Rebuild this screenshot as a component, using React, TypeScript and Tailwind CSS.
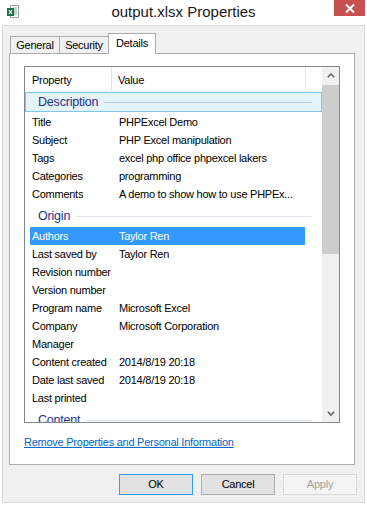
import React from "react";

type Row = { name: string; value?: string; selected?: boolean };

const description: Row[] = [
  { name: "Title", value: "PHPExcel Demo" },
  { name: "Subject", value: "PHP Excel manipulation" },
  { name: "Tags", value: "excel php office phpexcel lakers" },
  { name: "Categories", value: "programming" },
  { name: "Comments", value: "A demo to show how to use PHPEx..." },
];

const origin: Row[] = [
  { name: "Authors", value: "Taylor Ren", selected: true },
  { name: "Last saved by", value: "Taylor Ren" },
  { name: "Revision number" },
  { name: "Version number" },
  { name: "Program name", value: "Microsoft Excel" },
  { name: "Company", value: "Microsoft Corporation" },
  { name: "Manager" },
  { name: "Content created", value: "2014/8/19 20:18" },
  { name: "Date last saved", value: "2014/8/19 20:18" },
  { name: "Last printed" },
];

const ExcelIcon = () => (
  <svg width="12" height="13" viewBox="0 0 12 13">
    <rect x="3.5" y="0.5" width="8" height="12" fill="#fff" stroke="#9aa5a0" />
    <path d="M6 3h4M6 5h4M6 7h4M6 9h4" stroke="#7fae8e" strokeWidth="1" />
    <rect x="0" y="3" width="7" height="8" fill="#1e7145" />
    <path d="M2 5l3 4M5 5l-3 4" stroke="#fff" strokeWidth="1.2" />
  </svg>
);

const Chevron = ({ up }: { up?: boolean }) => (
  <svg width="8" height="5" viewBox="0 0 8 5">
    <path
      d={up ? "M0.8 4.2L4 1l3.2 3.2" : "M0.8 0.8L4 4l3.2-3.2"}
      stroke="#606060"
      strokeWidth="1.5"
      fill="none"
    />
  </svg>
);

const GroupHeader = ({ label, active, first }: { label: string; active?: boolean; first?: boolean }) => (
  <div className={first ? "h-[22px] shrink-0 pt-[1px]" : "h-[24px] shrink-0 pt-[3px]"}>
    <div
      className={
        active
          ? "h-[20px] flex items-center border border-[#7dc7ee] bg-[#e5f3fb] pl-[12px] pr-[9px]"
          : "h-[20px] flex items-center border border-transparent pl-[12px] pr-[9px]"
      }
    >
      <span className="text-[#1e3287] text-[12.5px] leading-none tracking-[-0.2px]">{label}</span>
      <div className={active ? "flex-1 ml-[6px] h-px bg-[#b9cde0]" : "flex-1 ml-[6px] h-px bg-[#dde3ec]"} />
    </div>
  </div>
);

const PropRow = ({ row }: { row: Row }) => (
  <div className="h-[18px] shrink-0 flex pl-[5px] pr-[17px]">
    <div
      className={
        row.selected
          ? "flex-1 flex items-center bg-[#3399ff] text-white"
          : "flex-1 flex items-center text-black"
      }
    >
      <span className="w-[89px] pl-[2px] whitespace-nowrap">{row.name}</span>
      <span className="whitespace-nowrap">{row.value}</span>
    </div>
  </div>
);

const Tab = ({ label, w }: { label: string; w: string }) => (
  <div
    className={`${w} h-[18px] mt-[3px] -mr-px border border-[#acacac] bg-[#f0f0f0] flex items-center justify-center`}
  >
    {label}
  </div>
);

export default function App() {
  return (
    <div
      className="w-[367px] h-[506px] bg-white overflow-hidden text-[11px] tracking-[-0.25px] text-black"
      style={{ fontFamily: '"Liberation Sans", Arial, sans-serif' }}
    >
      {/* title bar */}
      <div className="h-[25px] grid grid-cols-[1fr_auto_1fr] items-start">
        <div className="pl-[7px] pt-[5px]">
          <ExcelIcon />
        </div>
        <div className="pt-[1px] text-[15px] tracking-normal text-[#1a1a1a]">output.xlsx Properties</div>
        <div className="flex justify-end pr-[2px]">
          <div className="w-[31px] h-[16px] bg-[#c75050] flex items-center justify-center">
            <svg width="10" height="9" viewBox="0 0 10 9">
              <path d="M1 0.5l8 8M9 0.5l-8 8" stroke="#fff" strokeWidth="2" />
            </svg>
          </div>
        </div>
      </div>

      {/* window body */}
      <div className="mx-[2px] h-[478px] border border-[#dadada] bg-[#f0f0f0] px-[6px] pt-[7px]">
        {/* tabs */}
        <div className="flex pl-[1px] h-[20px] relative z-10">
          <Tab label="General" w="w-[50px]" />
          <Tab label="Security" w="w-[50px]" />
          <div className="w-[48px] h-[21px] border border-b-0 border-[#acacac] bg-white flex items-center justify-center pb-[1px]">
            Details
          </div>
        </div>
        {/* panel */}
        <div className="h-[412px] w-[346px] border border-[#acacac] bg-white px-[14px] pt-[12px]">
          <div className="h-[357px] border border-[#828790] flex overflow-hidden">
            <div className="flex-1 flex flex-col overflow-hidden">
              <div className="h-[24px] shrink-0 flex">
                <div className="w-[87px] border-r border-[#e5e5e5] flex items-center pl-[7px] pt-[2px]">Property</div>
                <div className="w-[194px] border-r border-[#e5e5e5] flex items-center pl-[6px] pt-[2px]">Value</div>
              </div>
              <GroupHeader label="Description" active first />
              {description.map((r) => (
                <PropRow key={r.name} row={r} />
              ))}
              <GroupHeader label="Origin" />
              {origin.map((r) => (
                <PropRow key={r.name} row={r} />
              ))}
              <GroupHeader label="Content" />
            </div>
            {/* scrollbar */}
            <div className="w-[17px] bg-[#f0f0f0] flex flex-col items-center">
              <div className="h-[17px] flex items-center justify-center">
                <Chevron up />
              </div>
              <div className="w-full h-[169px] mt-px bg-[#cdcdcd]" />
              <div className="flex-1" />
              <div className="h-[17px] flex items-center justify-center">
                <Chevron />
              </div>
            </div>
          </div>
          <div className="mt-[11px] text-[#0066cc] underline">Remove Properties and Personal Information</div>
        </div>
        {/* buttons */}
        <div className="flex justify-end gap-[8px] pr-[1px] pt-[9px]">
          <div className="w-[74px] h-[21px] border border-[#3399ff] bg-[#e1e1e1] flex items-center justify-center">
            OK
          </div>
          <div className="w-[74px] h-[21px] border border-[#adadad] bg-[#e1e1e1] flex items-center justify-center">
            Cancel
          </div>
          <div className="w-[74px] h-[21px] border border-[#d9d9d9] bg-[#f4f4f4] text-[#a0a0a0] flex items-center justify-center">
            Apply
          </div>
        </div>
      </div>
    </div>
  );
}
